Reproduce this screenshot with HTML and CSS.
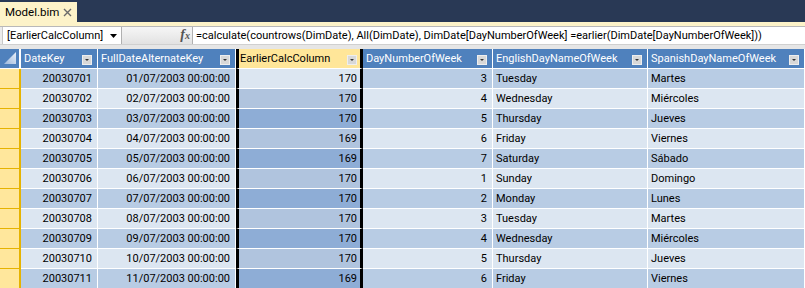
FILE: index.html
```html
<!DOCTYPE html>
<html>
<head>
<meta charset="utf-8">
<link rel="stylesheet" href="styles.css">
</head>
<body>
<div class="tabbar">
  <div class="tab">
    <span class="tab-title">Model.bim</span>
    <svg class="tab-close" width="9" height="9" viewBox="0 0 9 9"><path d="M1 1L8 8M8 1L1 8" stroke="#6a6a6a" stroke-width="1.4"/></svg>
  </div>
</div>
<div class="band"></div>
<div class="fbar">
  <div class="namebox">
    <span class="namebox-text">[EarlierCalcColumn]</span>
    <svg class="namebox-arrow" width="7" height="4" viewBox="0 0 7 4"><polygon points="0,0 7,0 3.5,4" fill="#000"/></svg>
  </div>
  <div class="fxarea"><span class="fx">f<span class="fx-x">x</span></span></div>
  <div class="formula">=calculate(countrows(DimDate), All(DimDate), DimDate[DayNumberOfWeek] =earlier(DimDate[DayNumberOfWeek]))</div>
</div>
<div class="gap"></div>
<div class="grid">
  <div class="row head">
    <div class="cell w-rh corner"><svg width="13" height="13" viewBox="0 0 13 13"><defs><linearGradient id="tg" x1="0" y1="1" x2="1" y2="0"><stop offset="0" stop-color="#9db8dc"/><stop offset="1" stop-color="#e9f0f9"/></linearGradient></defs><polygon points="0,12 12,0 12,12" fill="url(#tg)"/></svg></div>
    <div class="cell w-dk"><span>DateKey</span><span class="hbtn"></span></div>
    <div class="cell w-fd"><span>FullDateAlternateKey</span><span class="hbtn"></span></div>
    <div class="cell w-ec sel"><span>EarlierCalcColumn</span><span class="hbtn"></span></div>
    <div class="cell w-dn"><span>DayNumberOfWeek</span><span class="hbtn"></span></div>
    <div class="cell w-en"><span>EnglishDayNameOfWeek</span><span class="hbtn"></span></div>
    <div class="cell w-es"><span>SpanishDayNameOfWeek</span><span class="hbtn"></span></div>
  </div>
  <div class="row odd">
    <div class="cell w-rh rh"></div>
    <div class="cell w-dk num">20030701</div>
    <div class="cell w-fd num">01/07/2003 00:00:00</div>
    <div class="cell w-ec num sel active">170</div>
    <div class="cell w-dn num">3</div>
    <div class="cell w-en">Tuesday</div>
    <div class="cell w-es">Martes</div>
  </div>
  <div class="row even">
    <div class="cell w-rh rh"></div>
    <div class="cell w-dk num">20030702</div>
    <div class="cell w-fd num">02/07/2003 00:00:00</div>
    <div class="cell w-ec num sel">170</div>
    <div class="cell w-dn num">4</div>
    <div class="cell w-en">Wednesday</div>
    <div class="cell w-es">Miércoles</div>
  </div>
  <div class="row odd">
    <div class="cell w-rh rh"></div>
    <div class="cell w-dk num">20030703</div>
    <div class="cell w-fd num">03/07/2003 00:00:00</div>
    <div class="cell w-ec num sel">170</div>
    <div class="cell w-dn num">5</div>
    <div class="cell w-en">Thursday</div>
    <div class="cell w-es">Jueves</div>
  </div>
  <div class="row even">
    <div class="cell w-rh rh"></div>
    <div class="cell w-dk num">20030704</div>
    <div class="cell w-fd num">04/07/2003 00:00:00</div>
    <div class="cell w-ec num sel">169</div>
    <div class="cell w-dn num">6</div>
    <div class="cell w-en">Friday</div>
    <div class="cell w-es">Viernes</div>
  </div>
  <div class="row odd">
    <div class="cell w-rh rh"></div>
    <div class="cell w-dk num">20030705</div>
    <div class="cell w-fd num">05/07/2003 00:00:00</div>
    <div class="cell w-ec num sel">169</div>
    <div class="cell w-dn num">7</div>
    <div class="cell w-en">Saturday</div>
    <div class="cell w-es">Sábado</div>
  </div>
  <div class="row even">
    <div class="cell w-rh rh"></div>
    <div class="cell w-dk num">20030706</div>
    <div class="cell w-fd num">06/07/2003 00:00:00</div>
    <div class="cell w-ec num sel">170</div>
    <div class="cell w-dn num">1</div>
    <div class="cell w-en">Sunday</div>
    <div class="cell w-es">Domingo</div>
  </div>
  <div class="row odd">
    <div class="cell w-rh rh"></div>
    <div class="cell w-dk num">20030707</div>
    <div class="cell w-fd num">07/07/2003 00:00:00</div>
    <div class="cell w-ec num sel">170</div>
    <div class="cell w-dn num">2</div>
    <div class="cell w-en">Monday</div>
    <div class="cell w-es">Lunes</div>
  </div>
  <div class="row even">
    <div class="cell w-rh rh"></div>
    <div class="cell w-dk num">20030708</div>
    <div class="cell w-fd num">08/07/2003 00:00:00</div>
    <div class="cell w-ec num sel">170</div>
    <div class="cell w-dn num">3</div>
    <div class="cell w-en">Tuesday</div>
    <div class="cell w-es">Martes</div>
  </div>
  <div class="row odd">
    <div class="cell w-rh rh"></div>
    <div class="cell w-dk num">20030709</div>
    <div class="cell w-fd num">09/07/2003 00:00:00</div>
    <div class="cell w-ec num sel">170</div>
    <div class="cell w-dn num">4</div>
    <div class="cell w-en">Wednesday</div>
    <div class="cell w-es">Miércoles</div>
  </div>
  <div class="row even">
    <div class="cell w-rh rh"></div>
    <div class="cell w-dk num">20030710</div>
    <div class="cell w-fd num">10/07/2003 00:00:00</div>
    <div class="cell w-ec num sel">170</div>
    <div class="cell w-dn num">5</div>
    <div class="cell w-en">Thursday</div>
    <div class="cell w-es">Jueves</div>
  </div>
  <div class="row odd">
    <div class="cell w-rh rh"></div>
    <div class="cell w-dk num">20030711</div>
    <div class="cell w-fd num">11/07/2003 00:00:00</div>
    <div class="cell w-ec num sel">169</div>
    <div class="cell w-dn num">6</div>
    <div class="cell w-en">Friday</div>
    <div class="cell w-es">Viernes</div>
  </div>
</div>
</body>
</html>
```
FILE: styles.css
```css
html, body {
  margin: 0;
  padding: 0;
}
body {
  width: 805px;
  height: 288px;
  overflow: hidden;
  background: #ffffff;
  font-family: Roboto, "Liberation Sans", sans-serif;
  font-size: 11px;
  color: #000;
}

/* tab strip */
.tabbar {
  height: 22px;
  background: #293955;
  display: flex;
  align-items: flex-end;
}
.tab {
  box-sizing: border-box;
  width: 77px;
  height: 20px;
  background: #fdf3c9;
  display: flex;
  align-items: center;
  padding-left: 5px;
}
.tab-title {
  width: 58px;
  font-size: 11.5px;
}
.tab-close {
  display: block;
}
.band {
  height: 4px;
  background: #fdf3c9;
}

/* formula bar */
.fbar {
  box-sizing: border-box;
  height: 18px;
  display: flex;
  background: #ebebeb;
  border-top: 1px solid #b9b9b9;
  padding-left: 2px;
}
.namebox {
  box-sizing: border-box;
  width: 120px;
  background: #fff;
  border-left: 1px solid #c8c8c8;
  border-right: 1px solid #b0b0b0;
  display: flex;
  align-items: center;
  padding-left: 4px;
}
.namebox-text {
  flex: 1;
}
.namebox-arrow {
  margin-right: 4px;
  display: block;
}
.fxarea {
  box-sizing: border-box;
  width: 70px;
  background: linear-gradient(#f6f6f6, #e2e2e2);
  display: flex;
  align-items: center;
  justify-content: flex-end;
  padding-right: 2px;
}
.fx {
  font-family: "Liberation Serif", serif;
  font-style: italic;
  font-weight: bold;
  font-size: 14px;
  color: #555;
  line-height: 14px;
}
.fx-x {
  font-size: 10px;
}
.formula {
  flex: 1;
  background: #fff;
  border-left: 1px solid #b0b0b0;
  padding-left: 3px;
  display: flex;
  align-items: center;
  white-space: nowrap;
  overflow: hidden;
}
.gap {
  height: 5px;
  background: #e6e6e6;
  border-top: 1px solid #d0d0d0;
  box-sizing: border-box;
}

/* grid */
.grid {
  display: flex;
  flex-direction: column;
}
.row {
  display: flex;
  height: 20px;
}
.cell {
  flex: none;
  box-sizing: border-box;
  height: 20px;
  border-right: 1px solid #fff;
  border-bottom: 1px solid #fff;
  display: flex;
  align-items: center;
  padding: 0 3px;
  white-space: nowrap;
  overflow: hidden;
}
.num {
  justify-content: flex-end;
  padding-right: 5px;
}
.w-rh { width: 21px; }
.w-dk { width: 77px; }
.w-fd { width: 138px; }
.w-ec { width: 127px; }
.w-dn { width: 130px; }
.w-en { width: 155px; }
.w-es { width: 157px; }

.row.odd .cell { background: #b8cce4; }
.row.even .cell { background: #dce6f1; }

.cell.sel {
  border-left: 3px solid #000;
  border-right: 3px solid #000;
  padding-right: 3px;
}
.row.odd .cell.sel { background: #8eadd6; }
.row.even .cell.sel { background: #b0c4de; }
.row .cell.sel.active { background: #dce6f1; }

.row .cell.rh {
  background: #ffe79c;
  border-right: 2px solid #e6b300;
  border-bottom: 1px solid #e6b300;
}

/* header row */
.row.head .cell {
  background: #4f81bd;
  color: #fff;
  justify-content: space-between;
  padding-right: 5px;
}
.row.head .cell.sel {
  background: #ffe699;
  color: #000;
  padding-right: 3px;
  padding-left: 1px;
}
.row.head .corner {
  border-right: 2px solid #fff;
  padding: 0 2px 0 4px;
  align-items: flex-end;
  padding-bottom: 3px;
}
.row.head .corner svg {
  display: block;
}
.hbtn {
  box-sizing: border-box;
  width: 10px;
  height: 10px;
  margin-top: 2px;
  background: #d8d8d8;
  border: 1px solid #eeeeee;
  position: relative;
  flex: none;
}
.hbtn::after {
  content: "";
  position: absolute;
  left: 2px;
  top: 3px;
  border-left: 2px solid transparent;
  border-right: 2px solid transparent;
  border-top: 2px solid #333;
}
```
